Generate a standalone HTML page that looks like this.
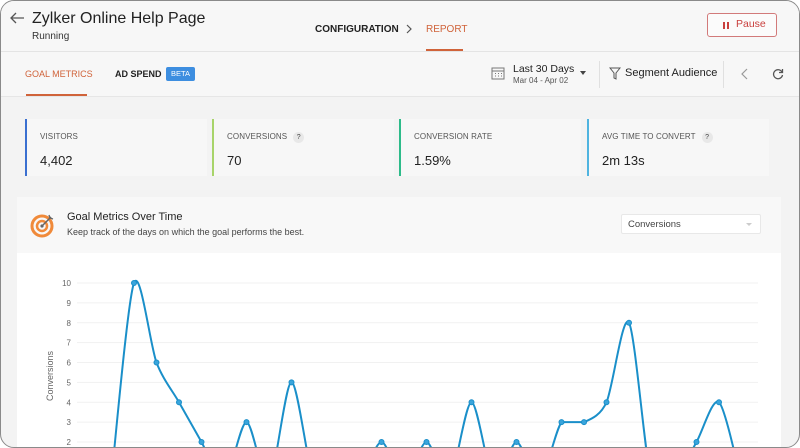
<!DOCTYPE html>
<html><head><meta charset="utf-8"><style>
*{box-sizing:border-box;margin:0;padding:0}
body{width:800px;height:448px;overflow:hidden;background:#fff;font-family:"Liberation Sans",sans-serif;color:#222}
.frame{position:absolute;left:0;top:0;width:800px;height:448px;border:1.5px solid #8a8a8a;border-radius:14px;overflow:hidden;background:#f3f3f3}
.hdr{position:absolute;left:0;top:0;width:800px;height:51px;background:#f7f7f7;border-bottom:1px solid #e4e4e4}
.tabs{position:absolute;left:0;top:51px;width:800px;height:45px;background:#f7f7f7;border-bottom:1px solid #e6e6e6}
.abs{position:absolute;white-space:nowrap}
.card{position:absolute;top:118px;width:182px;height:57px;background:#f7f7f7;border-left:2px solid}
.card .l{position:absolute;left:13px;top:13px;font-size:8px;color:#555;letter-spacing:.1px}
.card .v{position:absolute;left:13px;top:34px;font-size:13px;color:#222}
.q{display:inline-block;width:11px;height:11px;border-radius:50%;background:#e8e8e8;font-size:7px;text-align:center;line-height:11px;margin-left:6px;color:#444}
.panel{position:absolute;left:16px;top:196px;width:764px;height:252px;background:#fff}
.ph{position:absolute;left:0;top:0;width:764px;height:56px;background:#f8f8f8}
</style></head><body>
<div class="frame">
<div class="hdr"></div>
<svg class="abs" style="left:8px;top:10px" width="16" height="14" viewBox="0 0 16 14"><path d="M15 7H2M7 2L2 7l5 5" fill="none" stroke="#555" stroke-width="1.3"/></svg>
<div class="abs" style="left:31px;top:9px;font-size:16px;color:#222">Zylker Online Help Page</div>
<div class="abs" style="left:31px;top:30px;font-size:10px;color:#333">Running</div>
<div class="abs" style="left:314px;top:23px;font-size:10px;font-weight:bold;color:#222">CONFIGURATION</div>
<svg class="abs" style="left:404px;top:23px" width="8" height="10"><path d="M2 1l4 4-4 4" fill="none" stroke="#555" stroke-width="1.2"/></svg>
<div class="abs" style="left:425px;top:23px;font-size:10px;color:#d0633a">REPORT</div>
<div class="abs" style="left:425px;top:48px;width:37px;height:2px;background:#d0633a"></div>
<div class="abs" style="left:706px;top:12px;width:70px;height:24px;border:1px solid #d27a7a;border-radius:3px;background:#fbfbfb"></div>
<div class="abs" style="left:722px;top:21px;width:2px;height:7px;background:#c9403e"></div>
<div class="abs" style="left:726px;top:21px;width:2px;height:7px;background:#c9403e"></div>
<div class="abs" style="left:735px;top:17px;font-size:10.5px;color:#c9403e">Pause</div>
<div class="tabs"></div>
<div class="abs" style="left:24px;top:68px;font-size:9px;color:#d0633a">GOAL METRICS</div>
<div class="abs" style="left:25px;top:93px;width:61px;height:2px;background:#d0633a"></div>
<div class="abs" style="left:114px;top:68px;font-size:9px;font-weight:bold;color:#222">AD SPEND</div>
<div class="abs" style="left:165px;top:66px;width:29px;height:14px;background:#3d8ee0;border-radius:2px;color:#fff;font-size:7.5px;text-align:center;line-height:14px">BETA</div>
<svg class="abs" style="left:490px;top:65px" width="14" height="14"><rect x="1" y="2" width="12" height="11" fill="none" stroke="#777"/><path d="M1 5h12M4 7.5h1M7 7.5h1M10 7.5h1M4 10h1M7 10h1M10 10h1" stroke="#777"/></svg>
<div class="abs" style="left:512px;top:62px;font-size:10.5px;color:#222">Last 30 Days</div>
<div class="abs" style="left:512px;top:75px;font-size:8px;color:#555">Mar 04 - Apr 02</div>
<div class="abs" style="left:579px;top:70px;width:0;height:0;border-left:3.5px solid transparent;border-right:3.5px solid transparent;border-top:4px solid #444"></div>
<div class="abs" style="left:598px;top:60px;width:1px;height:27px;background:#e0e0e0"></div>
<svg class="abs" style="left:608px;top:66px" width="12" height="13"><path d="M1 1h10L7 6v6L5 11V6z" fill="none" stroke="#555"/></svg>
<div class="abs" style="left:624px;top:66px;font-size:11px;color:#222">Segment Audience</div>
<div class="abs" style="left:722px;top:60px;width:1px;height:27px;background:#e0e0e0"></div>
<svg class="abs" style="left:739px;top:67px" width="9" height="12"><path d="M7 1L2 6l5 5" fill="none" stroke="#999" stroke-width="1.2"/></svg>
<svg class="abs" style="left:771px;top:67px" width="12" height="12"><path d="M10 4A4.5 4.5 0 1 0 10.5 7" fill="none" stroke="#555" stroke-width="1.3"/><path d="M10.5 1v3.5H7" fill="none" stroke="#555" stroke-width="1.3"/></svg>

<div class="card" style="left:24px;border-color:#3a6fd0"><div class="l">VISITORS</div><div class="v">4,402</div></div>
<div class="card" style="left:211px;border-color:#a8d46a"><div class="l">CONVERSIONS<span class="q">?</span></div><div class="v">70</div></div>
<div class="card" style="left:398px;border-color:#2dbb8a"><div class="l">CONVERSION RATE</div><div class="v">1.59%</div></div>
<div class="card" style="left:586px;border-color:#4fb4e0"><div class="l">AVG TIME TO CONVERT<span class="q">?</span></div><div class="v">2m 13s</div></div>

<div class="panel"><div class="ph"></div></div>
<svg class="abs" style="left:29px;top:211px" width="26" height="26" viewBox="0 0 26 26"><circle cx="12" cy="14" r="10" fill="none" stroke="#f08a3a" stroke-width="3"/><circle cx="12" cy="14" r="5" fill="none" stroke="#f08a3a" stroke-width="2.5"/><path d="M12 14L21 5" stroke="#666" stroke-width="1.5"/><path d="M19 3l1 3 3 1" fill="none" stroke="#666" stroke-width="1.3"/><circle cx="12" cy="14" r="1.6" fill="#666"/></svg>
<div class="abs" style="left:66px;top:210px;font-size:11px;color:#222">Goal Metrics Over Time</div>
<div class="abs" style="left:66px;top:226px;font-size:9px;color:#444">Keep track of the days on which the goal performs the best.</div>
<div class="abs" style="left:620px;top:213px;width:140px;height:20px;background:#fff;border:1px solid #e8e8e8;border-radius:2px"></div>
<div class="abs" style="left:627px;top:218px;font-size:9.5px;color:#444">Conversions</div>
<div class="abs" style="left:745px;top:222px;width:0;height:0;border-left:3px solid transparent;border-right:3px solid transparent;border-top:3.5px solid #ccc"></div>
<div class="abs" style="left:44px;top:400px;font-size:9px;color:#666;transform:rotate(-90deg);transform-origin:0 0">Conversions</div>
<svg id="ch" class="abs" style="left:0;top:0" width="800" height="448"></svg>
</div>
<script>
var s='',y=v=>282+(10-v)*19.875;
for(var i=1;i<=10;i++){s+='<line x1="76" x2="757" y1="'+y(i)+'" y2="'+y(i)+'" stroke="#f1f1f1"/>';s+='<text x="70" y="'+(y(i)+3)+'" font-size="8" fill="#666" text-anchor="end" font-family="Liberation Sans">'+i+'</text>';}
var vals=[10,6,4,2,0,3,0,5,0,0,0,2,0,2,0,4,0,2,0,3,3,4,8,0,0,2,4,0];
var pts=[[110,y(0)]];vals.forEach((v,k)=>pts.push([133+22.5*k,y(v)]));
var d='M'+pts[0][0]+','+pts[0][1];
for(var i=0;i<pts.length-1;i++){var p0=pts[i-1]||pts[i],p1=pts[i],p2=pts[i+1],p3=pts[i+2]||p2,t=0.14;
var c1y=p1[1]+(p2[1]-p0[1])*t,c2y=p2[1]-(p3[1]-p1[1])*t;
if(p1[1]==p2[1]){c1y=p1[1];c2y=p2[1];}
d+='C'+(p1[0]+(p2[0]-p0[0])*t)+','+c1y+' '+(p2[0]-(p3[0]-p1[0])*t)+','+c2y+' '+p2[0]+','+p2[1];}
s+='<path d="'+d+'" fill="none" stroke="#1a8fc9" stroke-width="2"/>';
vals.forEach((v,k)=>{if(v>=2)s+='<circle cx="'+(133+22.5*k)+'" cy="'+y(v)+'" r="2.5" fill="#3aa5dc" stroke="#1a8fc9"/>';});
document.getElementById('ch').innerHTML=s;
</script>
</body></html>
